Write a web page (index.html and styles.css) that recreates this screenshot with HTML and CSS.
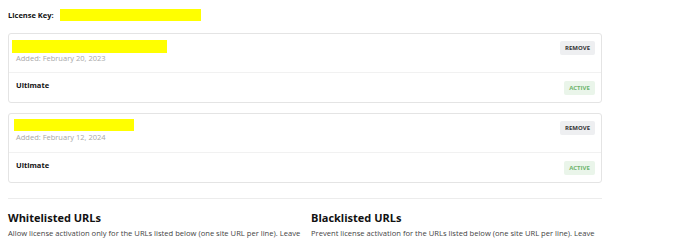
FILE: index.html
```html
<!DOCTYPE html>
<html>
<head>
<meta charset="utf-8">
<link rel="stylesheet" href="styles.css">
</head>
<body>
<div class="page">
  <div class="key-row">
    <span class="key-label">License Key:</span>
    <span class="redact key-value"></span>
  </div>

  <div class="card">
    <div class="card-head">
      <div class="card-info">
        <span class="redact name name-a"></span>
        <span class="added">Added: February 20, 2023</span>
      </div>
      <button class="btn-remove">REMOVE</button>
    </div>
    <div class="card-foot">
      <span class="plan">Ultimate</span>
      <span class="badge-active">ACTIVE</span>
    </div>
  </div>

  <div class="card card-second">
    <div class="card-head">
      <div class="card-info">
        <span class="redact name name-b"></span>
        <span class="added">Added: February 12, 2024</span>
      </div>
      <button class="btn-remove">REMOVE</button>
    </div>
    <div class="card-foot">
      <span class="plan">Ultimate</span>
      <span class="badge-active">ACTIVE</span>
    </div>
  </div>

  <hr class="divider">

  <div class="url-columns">
    <div class="url-col">
      <h3 class="url-title">Whitelisted URLs</h3>
      <p class="url-desc">Allow license activation only for the URLs listed below (one site URL per line). Leave</p>
    </div>
    <div class="url-col">
      <h3 class="url-title">Blacklisted URLs</h3>
      <p class="url-desc">Prevent license activation for the URLs listed below (one site URL per line). Leave</p>
    </div>
  </div>
</div>
</body>
</html>
```

FILE: styles.css
```css
* { box-sizing: border-box; }
html, body { margin: 0; padding: 0; background: #fff; }
body {
  font-family: "Open Sans", "Noto Sans", sans-serif;
  color: #111;
  overflow: hidden;
}
.page {
  padding: 9px 0 0 8px;
  width: 602px;
}
.redact { display: block; background: #ffff00; }
.key-row {
  display: flex;
  align-items: center;
  height: 12px;
}
.key-label {
  width: 52px;
  font-size: 7.5px;
  font-weight: 700;
  color: #111;
}
.key-value { width: 141px; height: 12px; }

.card {
  margin-top: 12px;
  border: 1px solid #e4e4e4;
  border-radius: 3px;
  width: 594px;
}
.card-second { margin-top: 10px; }
.card-head {
  display: flex;
  justify-content: space-between;
  align-items: flex-start;
  height: 39px;
  padding: 0 6px 0 7px;
  border-bottom: 1px solid #f1f1f1;
}
.card-info { display: flex; flex-direction: column; }
.name { height: 13px; }
.name-a { width: 155px; margin: 6px 0 0 -4px; }
.name-b { width: 120px; height: 12px; margin: 5px 0 1px -2px; }
.added {
  font-size: 7.5px;
  line-height: 11px;
  color: #a8a8a8;
}
.btn-remove {
  margin-top: 7px;
  height: 14px;
  width: 35px;
  padding: 0;
  border: 0;
  border-radius: 2px;
  background: #eeeff1;
  color: #333;
  font-family: inherit;
  font-size: 6px;
  font-weight: 700;
}
.card-foot {
  display: flex;
  justify-content: space-between;
  align-items: flex-start;
  height: 29px;
  padding: 7px 6px 0 7px;
}
.plan {
  font-size: 7.5px;
  line-height: 10px;
  font-weight: 700;
  color: #111;
}
.badge-active {
  margin-top: 1px;
  height: 14px;
  width: 31px;
  display: flex;
  align-items: center;
  justify-content: center;
  border-radius: 2px;
  background: #eaf5ea;
  color: #6cb46c;
  font-size: 6px;
  font-weight: 700;
}

.divider {
  margin: 15px 0 0 0;
  width: 594px;
  border: 0;
  border-top: 1px solid #ececec;
}
.url-columns {
  display: grid;
  grid-template-columns: 289px 291px;
  column-gap: 14px;
  width: 594px;
  margin-top: 12px;
}
.url-title {
  margin: 0;
  font-size: 11px;
  line-height: 14px;
  font-weight: 700;
  color: #111;
}
.url-desc {
  margin: 3px 0 0 0;
  font-size: 7.6px;
  line-height: 10px;
  color: #444;
  white-space: nowrap;
}
```
